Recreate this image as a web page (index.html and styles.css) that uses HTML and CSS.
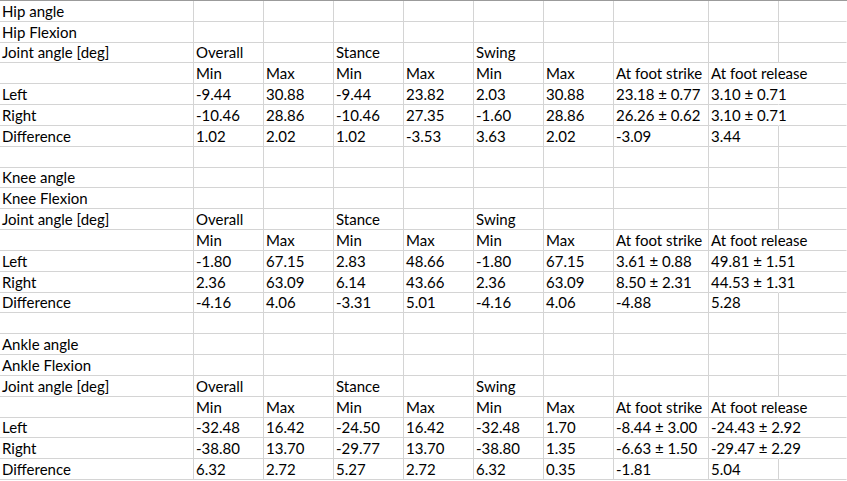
FILE: index.html
```html
<!DOCTYPE html>
<html lang="en">
<head>
<meta charset="utf-8">
<title>Joint angles</title>
<link rel="stylesheet" href="styles.css">
</head>
<body>
<table class="sheet">
<colgroup>
<col class="c-a"><col class="c-n"><col class="c-n"><col class="c-n"><col class="c-n"><col class="c-n"><col class="c-n"><col class="c-h"><col class="c-n"><col class="c-z">
</colgroup>
<tbody>
<tr><td>Hip angle</td><td></td><td></td><td></td><td></td><td></td><td></td><td></td><td></td><td></td></tr>
<tr><td>Hip Flexion</td><td></td><td></td><td></td><td></td><td></td><td></td><td></td><td></td><td></td></tr>
<tr><td>Joint angle [deg]</td><td>Overall</td><td></td><td>Stance</td><td></td><td>Swing</td><td></td><td></td><td></td><td></td></tr>
<tr><td></td><td>Min</td><td>Max</td><td>Min</td><td>Max</td><td>Min</td><td>Max</td><td>At foot strike</td><td class="ov">At foot release</td><td></td></tr>
<tr><td>Left</td><td>-9.44</td><td>30.88</td><td>-9.44</td><td>23.82</td><td>2.03</td><td>30.88</td><td>23.18 ± 0.77</td><td class="ov">3.10 ± 0.71</td><td></td></tr>
<tr><td>Right</td><td>-10.46</td><td>28.86</td><td>-10.46</td><td>27.35</td><td>-1.60</td><td>28.86</td><td>26.26 ± 0.62</td><td class="ov">3.10 ± 0.71</td><td></td></tr>
<tr><td>Difference</td><td>1.02</td><td>2.02</td><td>1.02</td><td>-3.53</td><td>3.63</td><td>2.02</td><td>-3.09</td><td>3.44</td><td></td></tr>
<tr><td></td><td></td><td></td><td></td><td></td><td></td><td></td><td></td><td></td><td></td></tr>
<tr><td>Knee angle</td><td></td><td></td><td></td><td></td><td></td><td></td><td></td><td></td><td></td></tr>
<tr><td>Knee Flexion</td><td></td><td></td><td></td><td></td><td></td><td></td><td></td><td></td><td></td></tr>
<tr><td>Joint angle [deg]</td><td>Overall</td><td></td><td>Stance</td><td></td><td>Swing</td><td></td><td></td><td></td><td></td></tr>
<tr><td></td><td>Min</td><td>Max</td><td>Min</td><td>Max</td><td>Min</td><td>Max</td><td>At foot strike</td><td class="ov">At foot release</td><td></td></tr>
<tr><td>Left</td><td>-1.80</td><td>67.15</td><td>2.83</td><td>48.66</td><td>-1.80</td><td>67.15</td><td>3.61 ± 0.88</td><td class="ov">49.81 ± 1.51</td><td></td></tr>
<tr><td>Right</td><td>2.36</td><td>63.09</td><td>6.14</td><td>43.66</td><td>2.36</td><td>63.09</td><td>8.50 ± 2.31</td><td class="ov">44.53 ± 1.31</td><td></td></tr>
<tr><td>Difference</td><td>-4.16</td><td>4.06</td><td>-3.31</td><td>5.01</td><td>-4.16</td><td>4.06</td><td>-4.88</td><td>5.28</td><td></td></tr>
<tr><td></td><td></td><td></td><td></td><td></td><td></td><td></td><td></td><td></td><td></td></tr>
<tr><td>Ankle angle</td><td></td><td></td><td></td><td></td><td></td><td></td><td></td><td></td><td></td></tr>
<tr><td>Ankle Flexion</td><td></td><td></td><td></td><td></td><td></td><td></td><td></td><td></td><td></td></tr>
<tr><td>Joint angle [deg]</td><td>Overall</td><td></td><td>Stance</td><td></td><td>Swing</td><td></td><td></td><td></td><td></td></tr>
<tr><td></td><td>Min</td><td>Max</td><td>Min</td><td>Max</td><td>Min</td><td>Max</td><td>At foot strike</td><td class="ov">At foot release</td><td></td></tr>
<tr><td>Left</td><td>-32.48</td><td>16.42</td><td>-24.50</td><td>16.42</td><td>-32.48</td><td>1.70</td><td>-8.44 ± 3.00</td><td class="ov">-24.43 ± 2.92</td><td></td></tr>
<tr><td>Right</td><td>-38.80</td><td>13.70</td><td>-29.77</td><td>13.70</td><td>-38.80</td><td>1.35</td><td>-6.63 ± 1.50</td><td class="ov">-29.47 ± 2.29</td><td></td></tr>
<tr><td>Difference</td><td>6.32</td><td>2.72</td><td>5.27</td><td>2.72</td><td>6.32</td><td>0.35</td><td>-1.81</td><td>5.04</td><td></td></tr>
</tbody>
</table>
</body>
</html>
```

FILE: styles.css
```css
html, body {
  margin: 0;
  padding: 0;
  background: #ffffff;
  overflow: hidden;
}

.sheet {
  border-collapse: separate;
  border-spacing: 0;
  table-layout: fixed;
  width: 847px;
  border-top: 1px solid #9b9b9b;
  font-family: "Lato", "Open Sans", sans-serif;
  font-size: 15px;
  color: #000000;
}

.c-a { width: 194px; }
.c-n { width: 70px; }
.c-h { width: 95px; }
.c-z { width: 68px; }

.sheet tr {
  height: 20.83px;
}

.sheet td {
  box-sizing: border-box;
  height: 20.83px;
  padding: 0 0 1px 2px;
  border-right: 1px solid #d4d4d4;
  border-bottom: 1px solid #d4d4d4;
  vertical-align: bottom;
  white-space: nowrap;
  overflow: visible;
  line-height: 17px;
}

.sheet td:last-child {
  border-right-color: transparent;
}

.sheet td.ov {
  border-right-color: transparent;
}
```
